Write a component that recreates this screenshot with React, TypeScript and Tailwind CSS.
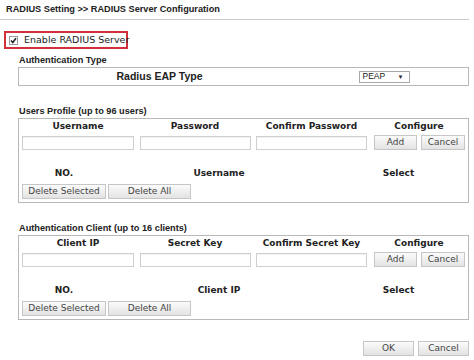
import React from "react";

interface SectionProps {
  title: string;
  heads: string[];
  listHead: string;
}

const Btn = ({ label, className }: { label: string; className: string }) => (
  <button
    className={`h-[15px] border border-[#c6c6c6] bg-linear-to-b from-[#fbfbfb] to-[#e3e3e3] text-[9px] leading-none text-[#444] whitespace-nowrap font-['DejaVu_Sans',Verdana,sans-serif] ${className}`}
  >
    {label}
  </button>
);

const Field = ({ className }: { className: string }) => (
  <div className={`h-[14px] border border-[#cfcfcf] bg-white shadow-[inset_0_1px_1px_rgba(0,0,0,0.06)] ${className}`} />
);

// Bảng nhập liệu + danh sách (Users Profile / Authentication Client)
const Section: React.FC<SectionProps> = ({ title, heads, listHead }) => {
  return (
    <div>
      <div className="mt-[18px] ml-[19px] h-[14px] leading-[14px] text-[9.2px] font-bold text-[#222] font-['Liberation_Sans',Arial,sans-serif]">
        {title}
      </div>
      <div className="ml-[18px] w-[451px] h-[85px] border border-[#b8b8b8] font-['DejaVu_Sans',Verdana,sans-serif] text-[#222]">
        {/* Header */}
        <div className="flex h-[15px] items-center text-[9px] font-bold">
          <div className="w-[118px] text-center">{heads[0]}</div>
          <div className="w-[116px] text-center">{heads[1]}</div>
          <div className="w-[117px] text-center">{heads[2]}</div>
          <div className="flex-1 text-center">Configure</div>
        </div>

        {/* Inputs */}
        <div className="mt-[1px] flex items-center">
          <Field className="ml-[3px] w-[112px]" />
          <Field className="ml-[6px] w-[111px]" />
          <Field className="ml-[5px] w-[111px]" />
          <Btn label="Add" className="ml-[7px] w-[43px]" />
          <Btn label="Cancel" className="ml-[4px] w-[44px]" />
        </div>

        {/* List header */}
        <div className="mt-[17px] flex h-[14px] items-center text-[9px] font-bold">
          <div className="w-[90px] text-center">NO.</div>
          <div className="w-[220px] text-center">{listHead}</div>
          <div className="flex-1 text-center">Select</div>
        </div>

        <div className="mt-[3px] flex">
          <Btn label="Delete Selected" className="ml-[3px] w-[84px]" />
          <Btn label="Delete All" className="ml-[2px] w-[83px]" />
        </div>
      </div>
    </div>
  );
};

export default function App() {
  return (
    <div className="relative h-[360px] w-[474px] overflow-hidden bg-white">
      {/* Title */}
      <div className="h-[20px] w-[469px] border-b border-[#c9c9c9] pl-[6px] pt-[2px] text-[9.2px] font-bold leading-[14px] text-[#222] font-['Liberation_Sans',Arial,sans-serif]">
        RADIUS Setting &gt;&gt; RADIUS Server Configuration
      </div>

      {/* Enable checkbox */}
      <div className="ml-[4px] mt-[11px] flex h-[18px] w-[124px] items-center border-2 border-[#d2313b] pl-[3px]">
        <svg width="9" height="9" viewBox="0 0 9 9" className="shrink-0">
          <rect x="0.5" y="0.5" width="8" height="8" fill="#fff" stroke="#9a9a9a" />
          <path d="M2 4.5 L3.8 6.5 L7 2.2" stroke="#222" strokeWidth="1.6" fill="none" />
        </svg>
        <span className="ml-[6px] whitespace-nowrap text-[9.5px] leading-none text-[#222] font-['DejaVu_Sans',Verdana,sans-serif]">
          Enable RADIUS Server
        </span>
      </div>

      {/* Authentication Type */}
      <div className="ml-[19px] mt-[5px] h-[13px] leading-[13px] text-[9.2px] font-bold text-[#222] font-['Liberation_Sans',Arial,sans-serif]">
        Authentication Type
      </div>
      <div className="ml-[18px] flex h-[19px] w-[451px] items-center border border-[#b8b8b8]">
        <div className="w-[281px] text-center text-[10.5px] font-bold text-[#222] font-['Liberation_Sans',Arial,sans-serif]">
          Radius EAP Type
        </div>
        <div className="flex flex-1 justify-center">
          <div className="flex h-[12px] w-[51px] items-center justify-between border border-[#a8a8a8] bg-white pl-[3px] pr-[5px] text-[8.5px] leading-none text-[#222] font-['Liberation_Sans',Arial,sans-serif]">
            <span>PEAP</span>
            <span className="text-[6px]">▼</span>
          </div>
        </div>
      </div>

      <Section
        title="Users Profile (up to 96 users)"
        heads={["Username", "Password", "Confirm Password"]}
        listHead="Username"
      />
      <Section
        title="Authentication Client (up to 16 clients)"
        heads={["Client IP", "Secret Key", "Confirm Secret Key"]}
        listHead="Client IP"
      />

      {/* Bottom buttons */}
      <div className="mt-[21px] flex w-[469px] justify-end">
        <Btn label="OK" className="w-[51px]" />
        <Btn label="Cancel" className="ml-[4px] w-[51px]" />
      </div>
    </div>
  );
}
